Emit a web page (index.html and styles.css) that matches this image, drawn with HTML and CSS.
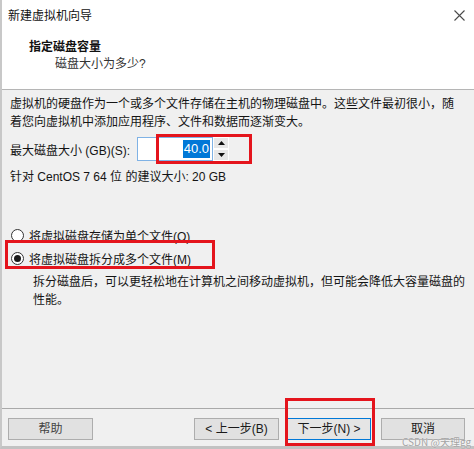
FILE: index.html
```html
<!DOCTYPE html>
<html lang="zh-CN">
<head>
<meta charset="utf-8">
<title>新建虚拟机向导</title>
<link rel="stylesheet" href="styles.css">
</head>
<body>
<div class="window">
  <div class="top">
    <div class="titlebar">
      <span class="title">新建虚拟机向导</span>
      <span class="close"><svg width="11" height="11" viewBox="0 0 11 11"><path d="M0.5 0.5L10.5 10.5M10.5 0.5L0.5 10.5" stroke="#4a4a4a" stroke-width="1.1" fill="none"/></svg></span>
    </div>
    <div class="header">
      <div class="h-title">指定磁盘容量</div>
      <div class="h-sub">磁盘大小为多少?</div>
    </div>
  </div>
  <div class="content">
    <p class="intro">虚拟机的硬盘作为一个或多个文件存储在主机的物理磁盘中。这些文件最初很小，随<br>着您向虚拟机中添加应用程序、文件和数据而逐渐变大。</p>
    <div class="size-row">
      <span class="label">最大磁盘大小 (GB)(S):</span>
      <div class="spin">
        <div class="spin-field"><span class="sel">40.0</span></div>
        <div class="spin-btns">
          <span class="spin-btn"><svg width="7" height="4" viewBox="0 0 7 4"><path d="M0 4L3.5 0L7 4Z" fill="#111"/></svg></span>
          <span class="spin-btn"><svg width="7" height="4" viewBox="0 0 7 4"><path d="M0 0L3.5 4L7 0Z" fill="#111"/></svg></span>
        </div>
      </div>
    </div>
    <p class="rec">针对 CentOS 7 64 位 的建议大小: 20 GB</p>
    <div class="options">
      <div class="radio"><span class="dot"></span><span>将虚拟磁盘存储为单个文件(O)</span></div>
      <div class="radio radio-second"><span class="dot checked"></span><span>将虚拟磁盘拆分成多个文件(M)</span></div>
      <p class="desc">拆分磁盘后，可以更轻松地在计算机之间移动虚拟机，但可能会降低大容量磁盘的<br>性能。</p>
    </div>
  </div>
  <div class="footer">
    <button class="btn btn-help">帮助</button>
    <div class="spacer"></div>
    <button class="btn btn-back">&lt; 上一步(B)</button>
    <button class="btn btn-next">下一步(N) &gt;</button>
    <button class="btn btn-cancel">取消</button>
  </div>
  <div class="mark mark-size"></div>
  <div class="mark mark-radio"></div>
  <div class="mark mark-next"></div>
  <div class="watermark">CSDN @天理gg</div>
</div>
</body>
</html>
```
FILE: styles.css
```css
* { box-sizing: border-box; margin: 0; padding: 0; }
html, body { width: 474px; height: 449px; overflow: hidden; }
body {
  font-family: "Liberation Sans", "Noto Sans CJK SC", sans-serif;
  font-size: 12px;
  color: #141414;
  background: #f0f0f0;
}
.window {
  position: relative;
  width: 474px;
  height: 449px;
  display: flex;
  flex-direction: column;
  border-left: 2px solid #c8c8c8;
  border-bottom: 3px solid #c2c2c2;
  background: #f0f0f0;
}
.top {
  height: 90px;
  flex: none;
  background: #fff;
  border-bottom: 1px solid #b5b5b5;
}
.titlebar {
  height: 30px;
  display: flex;
  align-items: center;
  justify-content: space-between;
  padding: 0 9px 0 6px;
}
.title {
  font-family: "Noto Sans CJK SC", sans-serif;
  font-size: 12px;
  line-height: 16px;
  color: #111;
}
.close svg { display: block; }
.header { padding: 6px 0 0 27px; }
.h-title {
  font-family: "Noto Sans CJK SC", sans-serif;
  font-weight: bold;
  line-height: 19px;
  color: #111;
}
.h-sub {
  padding-left: 26px;
  line-height: 19px;
  color: #333;
}
.content {
  flex: 1;
  padding: 5px 6px 0 8px;
}
.intro {
  line-height: 18px;
  white-space: nowrap;
}
.size-row {
  margin-top: 6px;
  height: 24px;
  display: flex;
  align-items: center;
}
.label { width: 127px; flex: none; }
.spin {
  display: flex;
  height: 24px;
}
.spin-field {
  width: 76px;
  height: 24px;
  background: #fff;
  border: 1px solid #7fb2e5;
  display: flex;
  align-items: center;
  justify-content: flex-end;
  padding-right: 2px;
}
.sel {
  background: #0078d7;
  color: #fff;
  font-size: 13px;
  line-height: 18px;
  padding: 0 1px;
}
.spin-btns {
  width: 16px;
  display: flex;
  flex-direction: column;
  background: #fff;
}
.spin-btn {
  flex: 1;
  display: flex;
  align-items: center;
  justify-content: center;
  background: #e8e8e8;
  border: 1px solid #fff;
}
.spin-btn svg { display: block; }
.rec {
  margin-top: 7px;
  line-height: 18px;
}
.options {
  margin-top: 40px;
  padding-left: 1px;
}
.radio {
  height: 18px;
  display: flex;
  align-items: center;
  gap: 5px;
}
.radio-second { margin-top: 5px; }
.dot {
  width: 13px;
  height: 13px;
  border: 1px solid #333;
  border-radius: 50%;
  background: #fff;
  display: flex;
  align-items: center;
  justify-content: center;
}
.dot.checked::after {
  content: "";
  width: 7px;
  height: 7px;
  border-radius: 50%;
  background: #1a1a1a;
}
.desc {
  margin-top: 6px;
  padding-left: 22px;
  line-height: 18px;
  white-space: nowrap;
}
.footer {
  height: 38px;
  flex: none;
  display: flex;
  align-items: flex-start;
  padding: 9px 9px 0 6px;
  border-top: 1px solid #a9a9a9;
}
.spacer { flex: 1; }
.btn {
  width: 85px;
  height: 22px;
  border: 1px solid #adadad;
  background: #e1e1e1;
  font-family: "Liberation Sans", "Noto Sans CJK SC", sans-serif;
  font-size: 12px;
  line-height: 14px;
  color: #1a1a1a;
}
.btn-help { color: #444; }
.btn-next {
  width: 84px;
  margin-left: 8px;
  border-color: #0078d7;
  background: #e5e5e5;
}
.btn-cancel { width: 84px; margin-left: 10px; }
.mark {
  position: absolute;
  border: 3px solid #e4141c;
}
.mark-size { left: 154px; top: 134px; width: 96px; height: 30px; }
.mark-radio { left: 3px; top: 240px; width: 210px; height: 29px; }
.mark-next { left: 283px; top: 398px; width: 90px; height: 48px; }
.watermark {
  position: absolute;
  left: 400px;
  top: 437px;
  font-family: "Noto Sans CJK SC", sans-serif;
  font-size: 10px;
  line-height: 10px;
  color: #a3a3a3;
  text-shadow: 0 0 1px #fff;
}
```
